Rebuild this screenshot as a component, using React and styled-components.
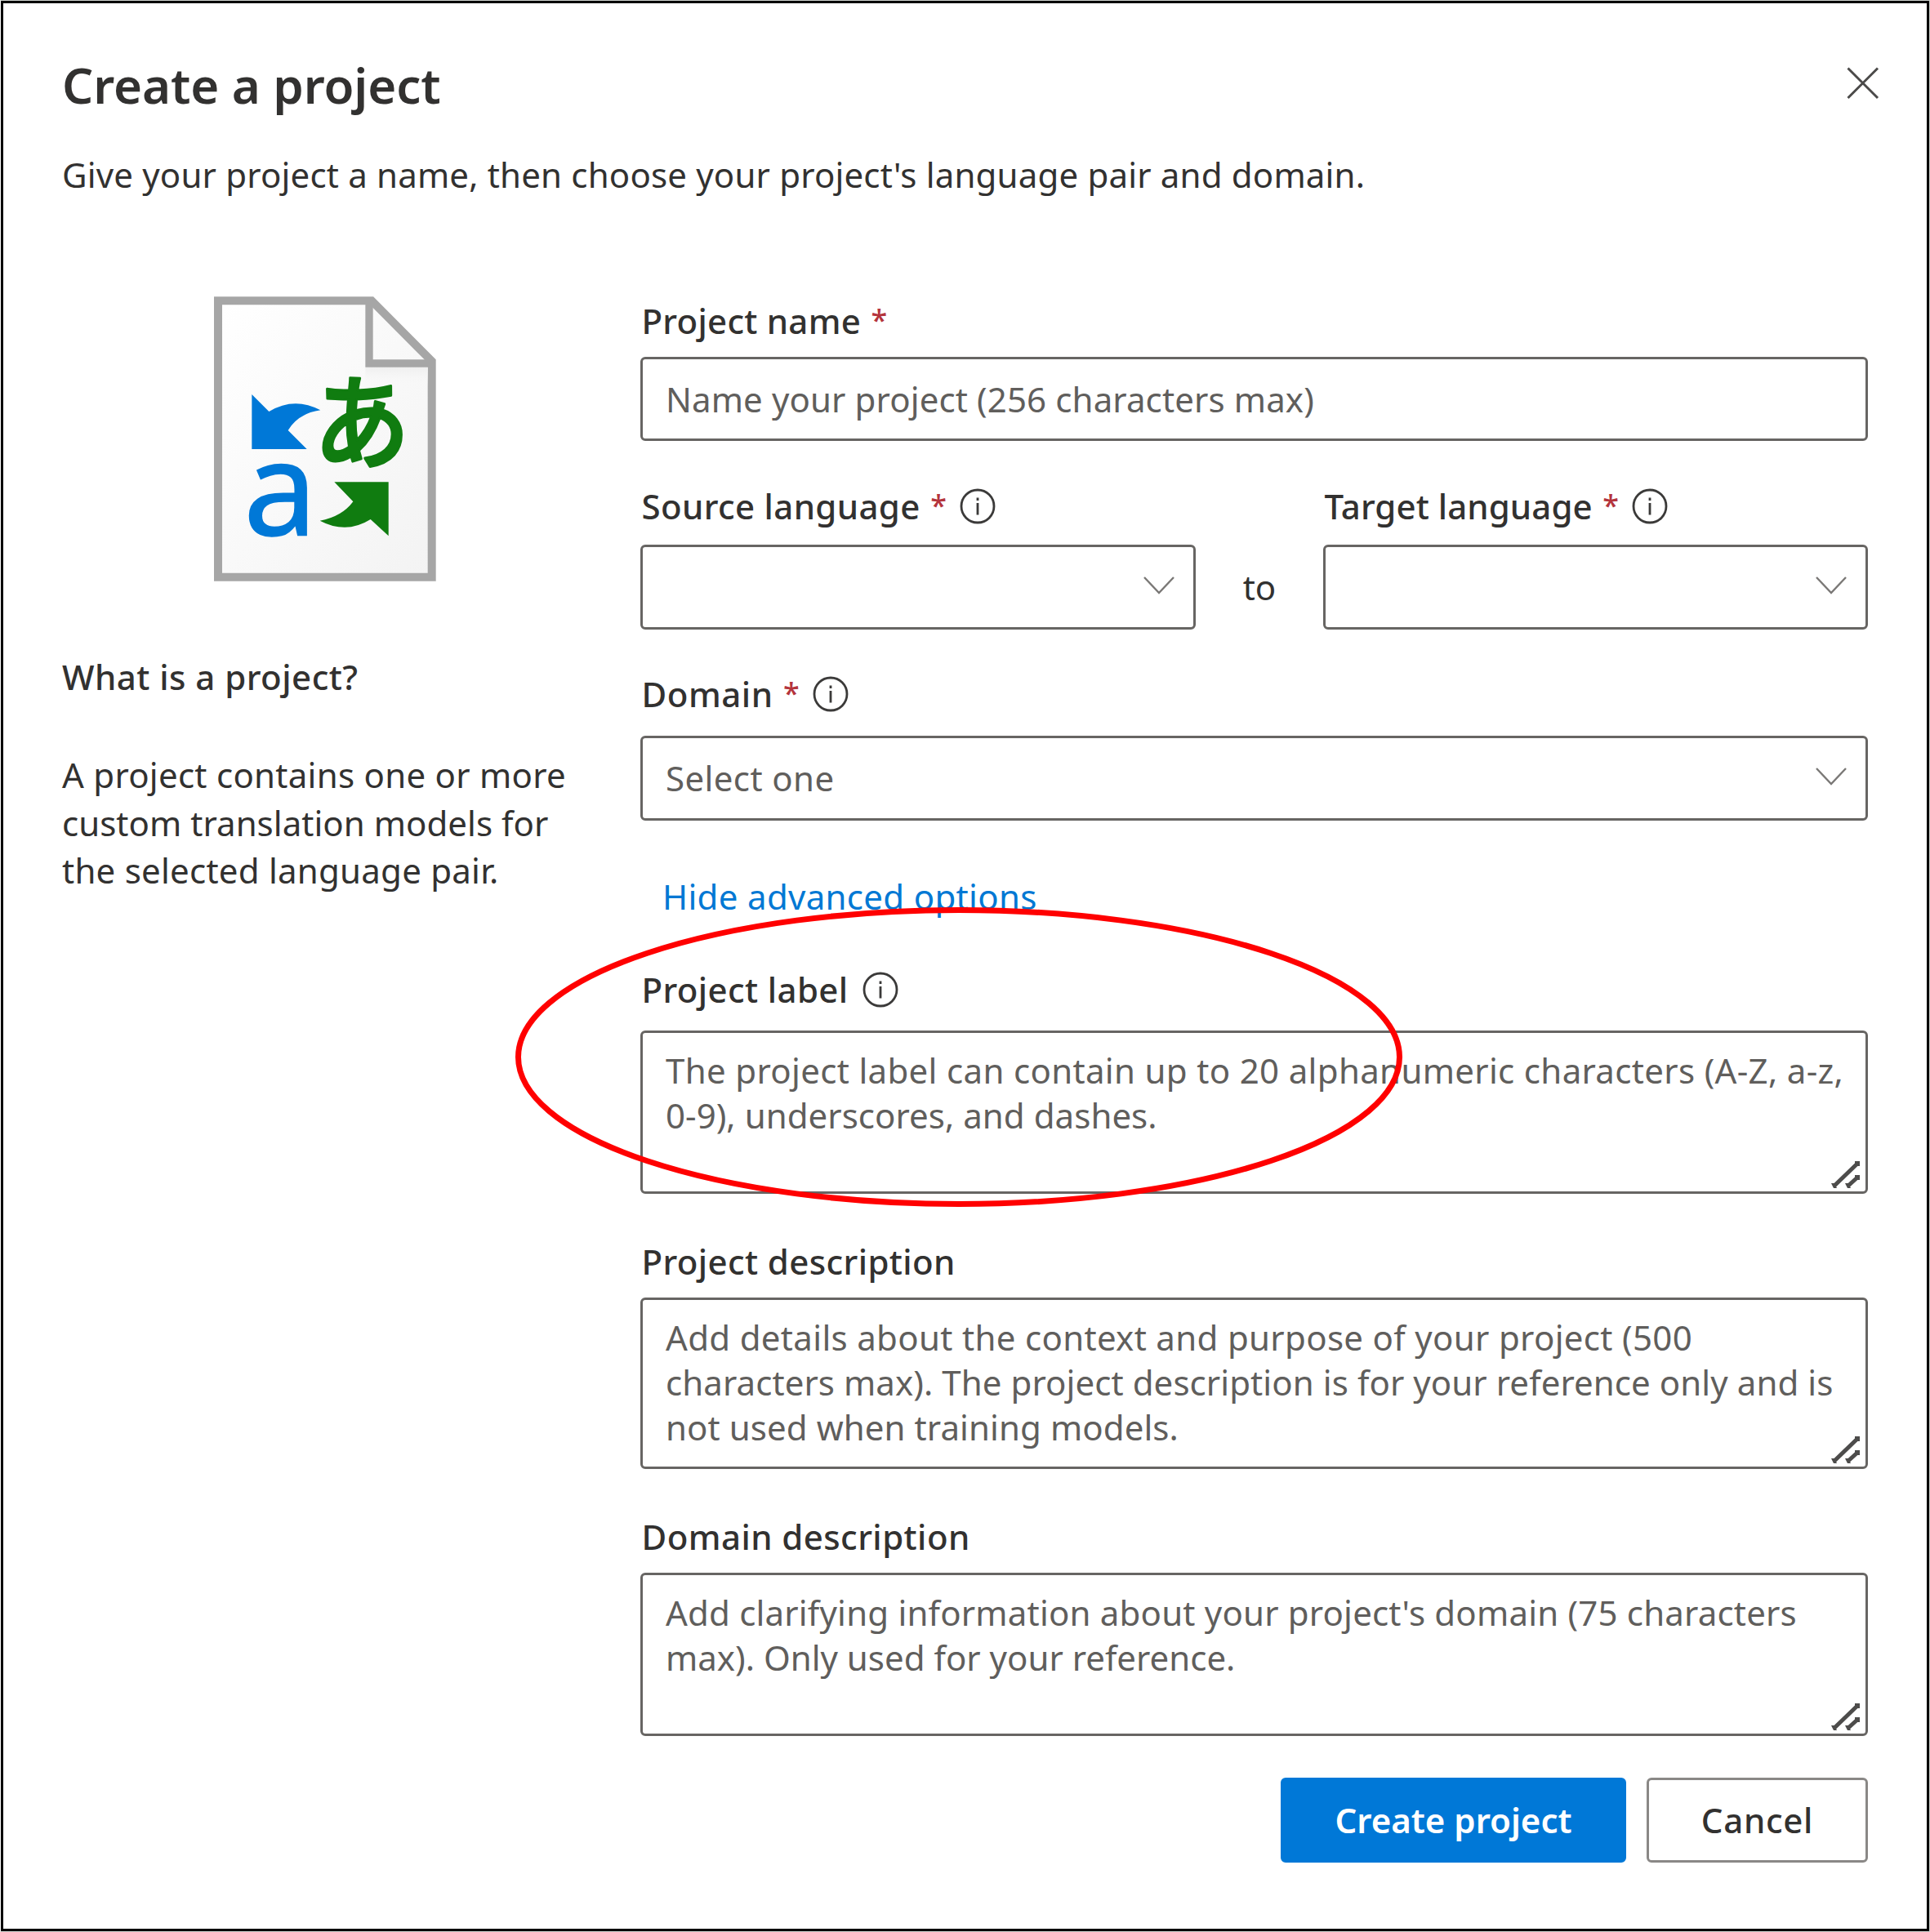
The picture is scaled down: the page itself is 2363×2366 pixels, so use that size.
import styled, { createGlobalStyle } from "styled-components";

const App = () => {
  return (
    <Page>
      <GlobalStyle />
      <Dialog>
        <Header>
          <div>
            <Title>Create a project</Title>
            <Subtitle>
              Give your project a name, then choose your project's language pair
              and domain.
            </Subtitle>
          </div>
          <CloseButton aria-label="Close">
            <svg width="40" height="40" viewBox="0 0 40 40">
              <path d="M1.5 1.5 38 38M38 1.5 1.5 38" />
            </svg>
          </CloseButton>
        </Header>
        <Content>
          <Aside>
            <DocumentIcon />
            <h2>What is a project?</h2>
            <p>
              <Line $track={0.27}>A project contains one or more</Line>
              <Line $track={0.04}>custom translation models for</Line>
              <Line $track={0.24}>the selected language pair.</Line>
            </p>
          </Aside>
          <Form>
            <Field $top={1} $gap={15}>
              <FieldLabel text="Project name" track={0.25} required />
              <Input>Name your project (256 characters max)</Input>
            </Field>
            <LanguageRow>
              <Field $gap={18} $width={680}>
                <FieldLabel text="Source language" track={0.35} required info />
                <Select />
              </Field>
              <To>to</To>
              <Field $gap={18} $width={667}>
                <FieldLabel text="Target language" track={0.08} required info />
                <Select />
              </Field>
            </LanguageRow>
            <Field $top={50} $gap={22}>
              <FieldLabel text="Domain" track={0.55} required info />
              <Select value="Select one" />
            </Field>
            <AdvancedLink>Hide advanced options</AdvancedLink>
            <Field $top={56} $gap={21}>
              <FieldLabel text="Project label" track={0.38} info />
              <TextArea
                height={200}
                lines={[
                  [
                    "The project label can contain up to 20 alphanumeric characters (A-Z, a-z,",
                    0.33,
                  ],
                  ["0-9), underscores, and dashes.", 0.05],
                ]}
              />
            </Field>
            <Field $top={54} $gap={15}>
              <FieldLabel text="Project description" track={0.38} />
              <TextArea
                height={210}
                lines={[
                  [
                    "Add details about the context and purpose of your project (500",
                    0.32,
                  ],
                  [
                    "characters max). The project description is for your reference only and is",
                    0.08,
                  ],
                  ["not used when training models.", 0.08],
                ]}
              />
            </Field>
            <Field $top={54} $gap={15}>
              <FieldLabel text="Domain description" track={0.43} />
              <TextArea
                height={200}
                lines={[
                  [
                    "Add clarifying information about your project's domain (75 characters",
                    0.19,
                  ],
                  ["max). Only used for your reference.", 0.01],
                ]}
              />
            </Field>
            <Actions>
              <Button $primary $width={423}>
                Create project
              </Button>
              <Button $width={271}>Cancel</Button>
            </Actions>
          </Form>
        </Content>
        <Highlight viewBox="0 0 1086 367">
          <ellipse cx="543" cy="183.5" rx="539.5" ry="180" />
        </Highlight>
      </Dialog>
    </Page>
  );
};

const FieldLabel = ({ text, track, required, info }) => (
  <Label $track={track}>
    {text}
    {required && <Star>*</Star>}
    {info && <InfoIcon />}
  </Label>
);

const InfoIcon = () => (
  <InfoSvg viewBox="0 0 44 44">
    <circle cx="22" cy="22" r="20" />
    <path d="M22 18V32.5M22 11.5V15" />
  </InfoSvg>
);

const Select = ({ value }) => (
  <SelectBox>
    <span>{value}</span>
    <svg width="38" height="22" viewBox="0 0 38 22">
      <path d="M1 1 19 20 37 1" />
    </svg>
  </SelectBox>
);

const TextArea = ({ height, lines }) => (
  <AreaBox $height={height}>
    {lines.map(([text, track]) => (
      <Line key={text} $track={track}>
        {text}
      </Line>
    ))}
    <Grip viewBox="0 0 36 35">
      <path d="M4 31 32 4M21 31 32 21" />
      <path d="M29 1h6v6h-6zM29 18h6v6h-6zM0 28h4l3 6h-4zM17 28h4l3 6h-4z" />
    </Grip>
  </AreaBox>
);

const DocumentIcon = () => (
  <DocSvg viewBox="66 70 815 1046">
    <defs>
      <linearGradient id="paper" x1="0" y1="0" x2="1" y2="1">
        <stop offset="0" stopColor="#ffffff" />
        <stop offset="1" stopColor="#f3f3f3" />
      </linearGradient>
      <linearGradient id="shade" x1="0" y1="0" x2="0" y2="1">
        <stop offset="0" stopColor="#efefef" />
        <stop offset="1" stopColor="#f9f9f9" stopOpacity="0" />
      </linearGradient>
    </defs>
    <path className="page" d="M81 86H645L866 308V1101H81Z" />
    <rect x="622" y="330" width="230" height="70" fill="url(#shade)" />
    <path className="fold" d="M636 86V316H866" />
    {/*source side*/}
    <path
      fill="#0078d7"
      d="M205 430 268 493Q361 437 457 488 375 500 338 562L407 631H205Z"
    />
    <text
      x="175"
      y="945"
      fontSize="480"
      fill="#0078d7"
      stroke="#0078d7"
      strokeWidth="5"
    >
      a
    </text>
    {/*target side*/}
    <text
      className="kana"
      transform="translate(432 672) scale(.93 1)"
      fontSize="380"
    >
      あ
    </text>
    <path
      fill="#107c10"
      d="M707 950 641 889Q552 945 455 894 535 880 577 824L508 752H707Z"
    />
  </DocSvg>
);

const GlobalStyle = createGlobalStyle`
  * {
    box-sizing: border-box;
  }
  body {
    margin: 0;
    background: #fff;
    color: #323130;
    font-family: "Noto Sans", "Open Sans", sans-serif;
    font-size: 42px;
    line-height: 58px;
  }
  h1, h2, p {
    margin: 0;
    font: inherit;
  }
  button {
    font: inherit;
    padding: 0;
  }
`;

const Page = styled.div`
  width: 2363px;
  height: 2366px;
  border: 1px solid #cdd1cd;
  border-left-color: #fff;
`;

const Dialog = styled.section`
  position: relative;
  height: 100%;
  border: 3px solid #000;
  padding: 60px 58px 0 72px;
`;

const Header = styled.header`
  display: flex;
  justify-content: space-between;
  align-items: flex-start;
`;

const Title = styled.h1`
  font-size: 60px;
  font-weight: 600;
  line-height: 80px;
  letter-spacing: -0.1px;
`;

const Subtitle = styled.p`
  margin-top: 41px;
  letter-spacing: 0.18px;
`;

const CloseButton = styled.button`
  display: flex;
  margin-top: 18px;
  border: 0;
  background: none;
  svg {
    stroke: #4b4a49;
    stroke-width: 3;
  }
`;

const Content = styled.div`
  display: grid;
  grid-template-columns: 708px 1503px;
  margin-top: 120px;
`;

const Aside = styled.aside`
  line-height: 58.4px;
  h2 {
    margin: 88px 0 62px;
    font-weight: 500;
    letter-spacing: 0.47px;
  }
`;

const DocSvg = styled.svg`
  display: block;
  width: 271.7px;
  height: 348.7px;
  margin-left: 186px;
  .page {
    fill: url(#paper);
    stroke: #a6a6a6;
    stroke-width: 30;
  }
  .fold {
    fill: none;
    stroke: #a6a6a6;
    stroke-width: 28;
  }
  .kana {
    font-family: "Noto Sans CJK JP", sans-serif;
    font-weight: 500;
    fill: #107c10;
    stroke: #107c10;
    stroke-width: 9;
    stroke-linejoin: round;
  }
`;

const Line = styled.span`
  display: block;
  white-space: nowrap;
  letter-spacing: ${({ $track }) => $track}px;
`;

const Form = styled.div`
  display: flex;
  flex-direction: column;
`;

const Field = styled.div`
  display: flex;
  flex-direction: column;
  gap: ${({ $gap }) => $gap}px;
  margin-top: ${({ $top = 0 }) => $top}px;
  width: ${({ $width }) => ($width ? `${$width}px` : "auto")};
`;

const Label = styled.div`
  display: flex;
  align-items: center;
  height: 58px;
  padding-left: 1.5px;
  font-weight: 500;
  letter-spacing: ${({ $track }) => $track}px;
`;

const Star = styled.span`
  display: flex;
  justify-content: center;
  width: 17px;
  margin: 0 0 3px 14px;
  color: #b4343c;
  font-size: 36px;
`;

const InfoSvg = styled.svg`
  width: 44px;
  height: 44px;
  margin-left: 17px;
  fill: none;
  stroke: #3b3a39;
  stroke-width: 2.8;
`;

const Box = styled.div`
  border: 3px solid #676563;
  border-radius: 6px;
  background: #fff;
  color: #605e5c;
`;

const Input = styled(Box)`
  display: flex;
  align-items: center;
  height: 103px;
  padding: 0 23px 0 28px;
  letter-spacing: 0.12px;
`;

const SelectBox = styled(Input)`
  justify-content: space-between;
  height: 104px;
  letter-spacing: 0.4px;
  svg {
    margin-bottom: 4px;
    fill: none;
    stroke: #7a7876;
    stroke-width: 2.4;
  }
`;

const AreaBox = styled(Box)`
  position: relative;
  height: ${({ $height }) => $height}px;
  padding: 18px 0 0 28px;
  line-height: 55.2px;
`;

const Grip = styled.svg`
  position: absolute;
  right: 6px;
  bottom: 3px;
  width: 36px;
  height: 35px;
  stroke: #4d4c4b;
  stroke-width: 5;
  path + path {
    fill: #4d4c4b;
    stroke: none;
  }
`;

const LanguageRow = styled.div`
  display: flex;
  justify-content: space-between;
  align-items: flex-end;
  margin-top: 51px;
`;

const To = styled.span`
  line-height: 104px;
`;

const AdvancedLink = styled.a`
  margin: 64px 0 0 27px;
  color: #0078d4;
  letter-spacing: 0.32px;
`;

const Actions = styled.div`
  display: flex;
  justify-content: flex-end;
  gap: 25px;
  margin-top: 50.5px;
`;

const Button = styled.button`
  width: ${({ $width }) => $width}px;
  height: 104px;
  border: 3px solid ${({ $primary }) => ($primary ? "#0078d7" : "#8a8886")};
  border-radius: 6px;
  background: ${({ $primary }) => ($primary ? "#0078d7" : "#fff")};
  color: ${({ $primary }) => ($primary ? "#fff" : "#323130")};
  font-weight: ${({ $primary }) => ($primary ? 600 : 500)};
  letter-spacing: ${({ $primary }) => ($primary ? 0 : 0.7)}px;
`;

/* red ring drawn over the project label field */
const Highlight = styled.svg`
  position: absolute;
  top: 1107px;
  left: 626.5px;
  width: 1086px;
  height: 367px;
  fill: none;
  stroke: #f00;
  stroke-width: 7;
  pointer-events: none;
`;

export default App;
